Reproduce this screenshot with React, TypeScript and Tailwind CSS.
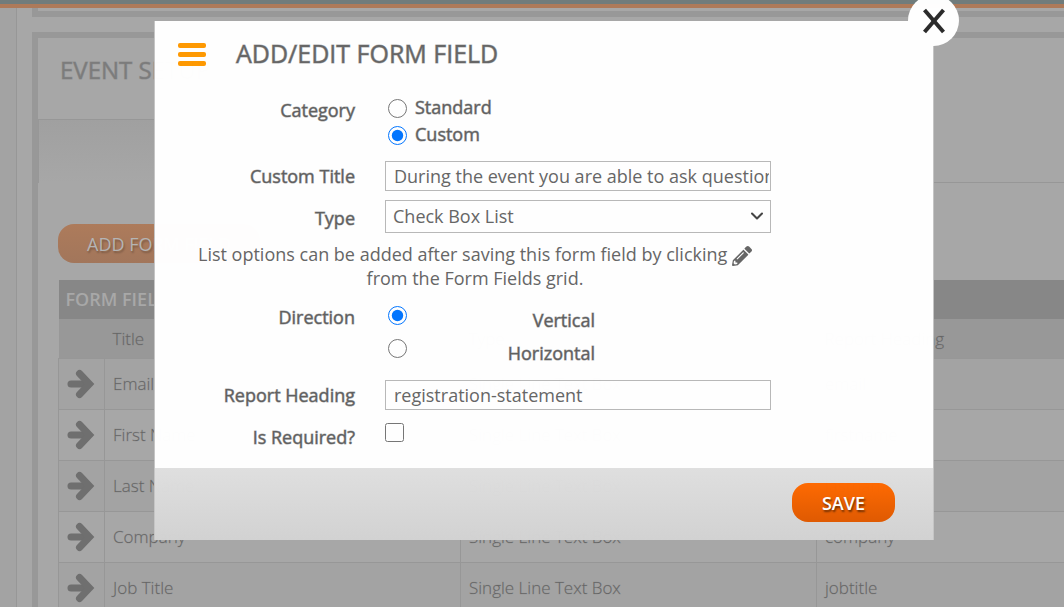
import React from 'react';
import { FaPencilAlt } from 'react-icons/fa';
import { ChevronDown } from 'lucide-react';

interface FieldRow {
  title: string;
  type: string;
  heading: string;
}

const rows: FieldRow[] = [
  { title: 'Email', type: 'Single Line Text Box', heading: 'email' },
  { title: 'First Name', type: 'Single Line Text Box', heading: 'firstname' },
  { title: 'Last Name', type: 'Single Line Text Box', heading: 'lastname' },
  { title: 'Company', type: 'Single Line Text Box', heading: 'company' },
  { title: 'Job Title', type: 'Single Line Text Box', heading: 'jobtitle' },
];

const labelClass = 'text-right text-lg leading-6 text-[#606060] [-webkit-text-stroke:1px_#60606080]';
const inputClass = 'w-full border border-[#b9b9b9] bg-white text-lg leading-6 text-[#666]';
const cellClass = 'border border-[#979797] px-2';

const ArrowIcon = () => (
  <svg viewBox="0 0 28 30" className="h-[30px] w-7" fill="none" stroke="#6f6f6f" strokeLinecap="round">
    <path d="M4 15H20" strokeWidth="7" />
    <path d="M12.5 4.5L22.5 15L12.5 25.5" strokeWidth="7" strokeLinejoin="miter" />
  </svg>
);

const FieldsTable = () => (
  <table className="w-[1115px] table-fixed border-collapse text-left text-[17px] font-light text-[#666] [-webkit-text-stroke:1px_#66666630]">
    <colgroup>
      <col className="w-[46px]" />
      <col className="w-[356px]" />
      <col className="w-[356px]" />
      <col className="w-[356px]" />
    </colgroup>
    <thead>
      <tr className="h-[39px] bg-[#878787] text-[#a8a8a8] [-webkit-text-stroke:0]">
        <th colSpan={4} className="px-[7px] pb-[2px] text-lg font-semibold">FORM FIELDS</th>
      </tr>
      <tr className="h-[39px] bg-[#989898]">
        <th />
        <th className="px-2 font-light">Title</th>
        <th className="px-2 font-light">Type</th>
        <th className="px-2 font-light">Report Heading</th>
      </tr>
    </thead>
    <tbody>
      {rows.map((row) => (
        <tr key={row.title} className="h-[51px] odd:bg-[#a3a3a3]">
          <td className={cellClass}>
            <ArrowIcon />
          </td>
          <td className={cellClass}>{row.title}</td>
          <td className={cellClass}>{row.type}</td>
          <td className={cellClass}>{row.heading}</td>
        </tr>
      ))}
    </tbody>
  </table>
);

const SetupPage = () => (
  <div className="h-screen overflow-hidden bg-[#a7a7a7]">
    <div className="h-2 border-b-4 border-[#ad7a5a] bg-[#707c7c]" />
    <div className="flex">
      <div className="w-[17px] shrink-0 border-r border-[#979797] bg-[#a3a3a3]" />
      <div className="min-w-0 flex-1 pl-[15px]">
        <div className="h-[9px] border-b-6 border-l-6 border-[#989898]" />
        <div className="mt-[15px] border-t-6 border-l-6 border-[#989898]">
          <h1 className="flex h-[81px] items-start pt-4 pl-[22px] text-2xl leading-8 text-[#7c7c7c] [-webkit-text-stroke:1px_#7c7c7c80]">
            EVENT SETUP
          </h1>
          <div className="flex h-16">
            <div className="w-[300px] border-t border-l border-[#979797] bg-linear-to-b from-[#a0a0a0] to-[#a7a7a7]" />
            <div className="flex-1 border-b border-[#979797]" />
          </div>
          <div className="pt-[41px] pl-5">
            <button className="h-[39px] rounded-2xl bg-linear-to-b from-[#ad7b5b] to-[#a2765b] px-[29px] text-lg text-[#b4b4b4] [text-shadow:1px_2px_2px_#0004]">
              ADD FORM FIELD
            </button>
            <div className="pt-[17px]">
              <FieldsTable />
            </div>
          </div>
        </div>
      </div>
    </div>
  </div>
);

const FormFieldDialog = () => (
  <div
    role="dialog"
    aria-labelledby="dialog-title"
    className="relative w-[780px] border-x border-[#c6c6c6] bg-white bg-clip-padding opacity-99"
  >
    <button
      aria-label="Close"
      className="absolute -top-[26px] -right-[26px] flex size-[51px] items-center justify-center rounded-full bg-white"
    >
      <svg viewBox="0 0 24 26" className="h-[26px] w-6" fill="none" stroke="#2a2a2a" strokeWidth="4">
        <path d="M2.5 2L21.5 24" />
        <path d="M21.5 2L2.5 24" />
      </svg>
    </button>

    <div className="flex h-[65px] items-center gap-[30px] pl-[23px]">
      <div className="flex w-7 flex-col gap-1 pt-[2px]">
        <span className="h-[5px] rounded-xs bg-[#ff9900]" />
        <span className="h-[5px] rounded-xs bg-[#ff9900]" />
        <span className="h-[5px] rounded-xs bg-[#ff9900]" />
      </div>
      <h2
        id="dialog-title"
        className="pb-[2px] text-[25px] leading-8 text-[#666] [-webkit-text-stroke:1px_#66666680]"
      >
        ADD/EDIT FORM FIELD
      </h2>
    </div>

    <form className="pt-2">
      <div className="grid grid-cols-[200px_386px] gap-x-[30px]">
        <div className={`${labelClass} pt-1`}>Category</div>
        <div className="pt-px">
          <label className="flex h-[27px] items-center gap-2 pl-[3px]">
            <input type="radio" name="category" className="size-[19px]" />
            <span className={`${labelClass} pb-[3px]`}>Standard</span>
          </label>
          <label className="flex h-[27px] items-center gap-2 pl-[3px]">
            <input type="radio" name="category" defaultChecked className="size-[19px]" />
            <span className={`${labelClass} pb-[3px]`}>Custom</span>
          </label>
        </div>

        <label htmlFor="custom-title" className={`${labelClass} pt-[15px]`}>Custom Title</label>
        <div className="pt-3">
          <input
            id="custom-title"
            type="text"
            defaultValue="During the event you are able to ask questions"
            className={`${inputClass} h-[30px] pr-px pl-2`}
          />
        </div>

        <label htmlFor="field-type" className={`${labelClass} pt-[15px]`}>Type</label>
        <div className="relative pt-[9px]">
          <select id="field-type" className={`${inputClass} h-[33px] appearance-none pb-[2px] pl-[7px]`}>
            <option>Check Box List</option>
          </select>
          <ChevronDown className="pointer-events-none absolute right-1 bottom-[7px] size-5 text-[#444]" strokeWidth={2.5} />
        </div>
      </div>

      <p className="w-[640px] px-8 pt-[9px] text-center text-lg leading-6 text-[#666]">
        List options can be added after saving this form field by clicking{' '}
        <FaPencilAlt className="inline size-5 align-text-bottom" /> from the Form Fields grid.
      </p>

      <div className="grid grid-cols-[200px_386px] gap-x-[30px] pt-3">
        <div className={`${labelClass} pt-[3px]`}>Direction</div>
        <div>
          <div className="flex h-[33px] w-[210px] items-start justify-between pt-1 pl-[3px]">
            <input id="vertical" type="radio" name="direction" defaultChecked className="size-[19px]" />
            <label htmlFor="vertical" className={`${labelClass} pt-[2px]`}>Vertical</label>
          </div>
          <div className="flex h-[33px] w-[210px] items-start justify-between pt-1 pl-[3px]">
            <input id="horizontal" type="radio" name="direction" className="size-[19px]" />
            <label htmlFor="horizontal" className={`${labelClass} pt-[2px]`}>Horizontal</label>
          </div>
        </div>

        <label htmlFor="report-heading" className={`${labelClass} pt-[15px]`}>Report Heading</label>
        <div className="pt-3">
          <input
            id="report-heading"
            type="text"
            defaultValue="registration-statement"
            className={`${inputClass} h-[30px] px-2`}
          />
        </div>

        <label htmlFor="is-required" className={`${labelClass} pt-[15px]`}>Is Required?</label>
        <div className="pt-[13px]">
          <input id="is-required" type="checkbox" className="block size-[19px]" />
        </div>
      </div>

      <div className="mt-[19px] flex h-[72px] items-center justify-end bg-linear-to-b from-[#e0e0e0] to-[#d3d3d3] pr-[38px] pb-[3px]">
        <button
          type="button"
          className="h-[39px] w-[103px] rounded-2xl bg-linear-to-b from-[#ff6a00] to-[#e05a00] text-lg font-semibold text-white [text-shadow:1px_2px_2px_#0008]"
        >
          SAVE
        </button>
      </div>
    </form>
  </div>
);

const App: React.FC = () => (
  <div className="font-['Open_Sans',sans-serif]">
    <SetupPage />
    <div className="fixed inset-0 flex items-start justify-center overflow-hidden pt-[21px] pl-6">
      <FormFieldDialog />
    </div>
  </div>
);

export default App;
